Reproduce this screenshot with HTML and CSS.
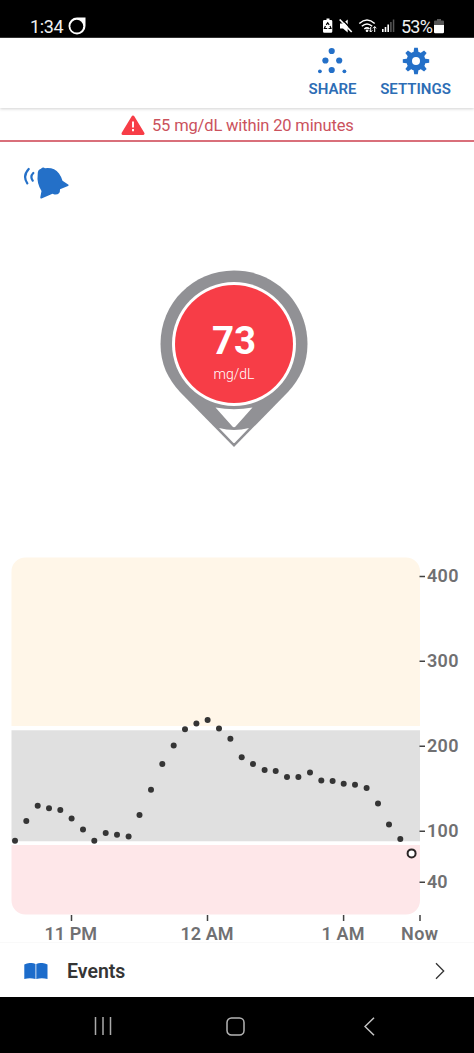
FILE: index.html
```html
<!DOCTYPE html>
<html lang="en">
<head>
  <meta charset="utf-8">
  <title>Glucose</title>
  <link rel="stylesheet" href="styles.css">
</head>
<body>
  <div class="status-bar">
    <span class="clock">1:34</span>
    <svg class="status-logo" width="18" height="18" viewBox="0 0 18 18">
      <path d="M9 .5H17.5V9A8.5 8.5 0 1 1 9 .5z" fill="#fff"/>
      <circle cx="8.8" cy="9.2" r="6.4" fill="#000"/>
    </svg>
    <svg class="status-icons" width="73" height="16" viewBox="0 0 73 16">
      <path d="M3 2h1.500V.5h3V2H9q1.300 0 1.300 1.300v10.200q0 1.300-1.300 1.300H2.300Q1 14.800 1 13.500V3.300Q1 2 2.300 2z" fill="#fff"/>
      <path d="M4.200 6.800l1.500-2 1.500 2M8 8l1 2.500H6.500M3.400 8l-1 2.500h2.800" fill="none" stroke="#000" stroke-width="1.200"/>
      <path d="M18 5.500h3l4.700-4v13l-4.700-4h-3z" fill="#fff"/>
      <path d="M19 .3l12 12.500" stroke="#000" stroke-width="1.500"/>
      <path d="M17.700 1.500l12 12.500" stroke="#fff" stroke-width="1.700"/>
      <g fill="none" stroke="#fff" stroke-width="1.500">
        <path d="M37.300 5.500q7.700-7 15.400 0M39.800 8.300q5.200-4.700 10.400 0M42.300 11q2.700-2.300 5.200 0"/>
        <path d="M48.700 9v5M47 12.300l1.700 1.700 1.700-1.700M52.700 14V8.700M51 10.300l1.700-1.700 1.700 1.700" stroke-width="1"/>
      </g>
      <circle cx="45" cy="12.700" r="1.300" fill="#fff"/>
      <path d="M60 11h1.600v3H60zM62.700 9h1.600v5h-1.600zM65.400 6.500H67V14h-1.600z" fill="#fff"/>
      <path d="M68.100 4h1.600v10h-1.600zM70.800 1.500h1.500V14h-1.500z" fill="#555"/>
    </svg>
    <span class="percent">53%</span>
    <svg class="battery" width="10" height="15" viewBox="0 0 10 15">
      <path d="M1 1.500h2V0h4v1.500h2q1 0 1 1V7H0V2.500q0-1 1-1z" fill="#555"/>
      <path d="M0 6h10v7q0 1.200-1.200 1.200H1.200Q0 14.200 0 13z" fill="#fff"/>
    </svg>
  </div>

  <div class="header">
    <div class="header-button share">
      <svg width="30" height="28" viewBox="1.300 0 30 28" fill="#2470c8">
        <circle cx="15" cy="4" r="3.100"/>
        <circle cx="8.700" cy="13.500" r="3.100"/>
        <circle cx="22.500" cy="13.500" r="3.100"/>
        <circle cx="15" cy="23" r="3.100"/>
        <circle cx="3.200" cy="24.300" r="1.900"/>
        <circle cx="27.700" cy="24.300" r="1.900"/>
      </svg>
      <span>SHARE</span>
    </div>
    <div class="header-button settings">
      <svg width="28" height="28" viewBox="-14 -14 28 28">
        <g fill="#2470c8">
          <circle r="9.600"/>
          <path id="teeth" d="M-2.600-8l.8-5.200h3.600l.8 5.200v16l-.8 5.200h-3.600L-2.600 8z"/>
          <use href="#teeth" transform="rotate(45)"/>
          <use href="#teeth" transform="rotate(90)"/>
          <use href="#teeth" transform="rotate(135)"/>
        </g>
        <circle r="4" fill="#fff"/>
      </svg>
      <span>SETTINGS</span>
    </div>
  </div>

  <div class="alert">
    <svg width="24" height="20" viewBox="0 0 24 20">
      <path d="M12 2L22 18.500H2z" fill="#f73d47" stroke="#f73d47" stroke-width="3" stroke-linejoin="round"/>
      <path d="M12 6.500v6M12 14v2.200" stroke="#fff" stroke-width="1.900"/>
    </svg>
    <span>55 mg/dL within 20 minutes</span>
  </div>

  <div class="reading">
    <svg class="bell" width="48" height="34" viewBox="0 0 48 34">
      <path d="M16.700 8.500Q16.500 3.500 20 2.700Q22 .7 24 2.200Q33 1 38 7.500Q40.500 11 41.500 14.700L47.500 18.800Q48 19.800 47 20L39 23.300Q39.300 29 33.500 28.500L31.500 27.800L20.500 32.500Q19 32.800 19.300 31.300L20.500 25Q15.500 17 16.700 8.500z" fill="#2470c8"/>
      <path d="M7.700 3Q1.300 10 6.300 17.300M12.300 7Q8.800 10.500 11.700 14.700" fill="none" stroke="#2470c8" stroke-width="2.200" stroke-linecap="round"/>
    </svg>
    <div class="gauge">
      <svg width="148" height="178" viewBox="0 0 148 178">
        <path d="M74 .5C33 .5 .5 33 .5 74C.5 94 8 109 20 122L74 177L128 122C140 109 147.500 94 147.500 74C147.500 33 115 .5 74 .5z" fill="#919195"/>
        <circle cx="74" cy="74" r="62" fill="#fff"/>
        <circle cx="74" cy="74" r="59" fill="#f73d47"/>
        <path d="M55.500 137.500Q74 141 92.500 137.500L76 156Q74 158.500 72 156z" fill="#fff"/>
        <path d="M59 158Q74 162 89 158L75 172.500Q74 173.500 73 172.500z" fill="#fff"/>
      </svg>
      <div class="gauge-text">
        <div class="value">73</div>
        <div class="unit">mg/dL</div>
      </div>
    </div>
  </div>

  <svg class="chart" width="474" height="397" viewBox="0 545 474 397">
    <path d="M11.500 726V571.500a14 14 0 0 1 14-14H406a14 14 0 0 1 14 14V726z" fill="#fff6e8"/>
    <path d="M11.500 730.300H420V841.300H11.500z" fill="#e0e0e0"/>
    <path d="M11.500 845H420V900.500a14 14 0 0 1-14 14H25.500a14 14 0 0 1-14-14z" fill="#fee7e9"/>
    <path d="M419.500 576.500h5.500M419.500 661.300h5.500M419.500 746.300h5.500M419.500 831.200h5.500M419.500 882.300h5.500M71.500 915v6M207.500 915v6M343.600 915v6M420 915v6" stroke="#424242" stroke-width="1.500"/>
    <g class="axis">
      <text x="427" y="581.500" textLength="31.500">400</text>
      <text x="427" y="666.500" textLength="31.500">300</text>
      <text x="427" y="751.500" textLength="31.500">200</text>
      <text x="427" y="836.500" textLength="31.500">100</text>
      <text x="427" y="887.500">40</text>
      <text x="44.500" y="939.500" textLength="52.500">11 PM</text>
      <text x="180.500" y="939.500" textLength="53">12 AM</text>
      <text x="321.500" y="939.500" textLength="43">1 AM</text>
      <text x="401" y="939.500" textLength="37">Now</text>
    </g>
    <g id="dots" fill="#353535"></g>
    <circle cx="411.600" cy="853.400" r="4" fill="#fff" stroke="#2c2626" stroke-width="2"/>
  </svg>

  <div class="events">
    <svg width="24" height="17" viewBox="0 0 24 17" fill="#1c6ccb">
      <path d="M.3 1.500Q6-1.300 11.500 1V16Q6 14.500.3 16z"/>
      <path d="M12.300 1Q18-1.300 23.500 1.500V16Q18 14.500 12.300 16z"/>
    </svg>
    <span>Events</span>
    <svg class="chevron" width="10" height="18" viewBox="0 0 10 18">
      <path d="M1 1.300L8.700 9L1 16.700" fill="none" stroke="#333" stroke-width="1.300"/>
    </svg>
  </div>

  <div class="nav-bar">
    <svg width="18" height="18" viewBox="0 0 18 18">
      <path d="M1.500 0v18M9 0v18M16.500 0v18" stroke="#aaa" stroke-width="1.500"/>
    </svg>
    <svg class="home" width="19" height="19" viewBox="0 0 19 19">
      <rect x="1" y="1" width="17" height="17" rx="4.500" fill="none" stroke="#b5b5b5" stroke-width="1.500"/>
    </svg>
    <svg width="11" height="19" viewBox="0 0 11 19">
      <path d="M10 .7L1 9.500L10 18.300" fill="none" stroke="#c4c4c4" stroke-width="1.500"/>
    </svg>
  </div>

  <script>
    // one reading every five minutes
    const readings = [
      [15, 840.7], [26.3, 821], [37.7, 805.7], [49, 808.3], [60.3, 810], [71.6, 818.4],
      [83, 829.6], [94.3, 840.7], [105.7, 833], [117, 834.7], [128.6, 836.4], [139.5, 815],
      [151, 789.7], [162.3, 764], [173.7, 745.4], [185, 729.3], [196.4, 723.4], [207.6, 720],
      [219, 728.4], [230.4, 738.7], [241.7, 757.3], [253, 764], [264.6, 770], [275.7, 771],
      [287, 777], [298.4, 777], [310, 772.6], [321.3, 780.4], [332.6, 781], [343.7, 783.7],
      [355, 784.7], [366.6, 788], [378, 803.4], [389, 824.4], [400.3, 839]
    ];
    document.getElementById('dots').innerHTML =
      readings.map(([x, y]) => `<circle cx="${x}" cy="${y}" r="3"/>`).join('');
  </script>
</body>
</html>
```
FILE: styles.css
```css
body {
  font-family: Roboto, "Liberation Sans", sans-serif;
  margin: 0;
  width: 474px;
  height: 1053px;
  overflow: hidden;
  background-color: #fff;
}

svg {
  display: block;
  flex-shrink: 0;
}

.status-bar {
  display: flex;
  align-items: center;
  box-sizing: border-box;
  height: 38px;
  padding: 15px 30px 0;
  background-color: #000;
  border-bottom: 1px solid #333;
  color: #f0f0f0;
  font-size: 18px;
}

.clock {
  width: 33px;
  letter-spacing: -0.4px;
}

.status-logo {
  margin-left: 5px;
}

.status-icons {
  margin-left: 236px;
}

.percent {
  width: 32px;
  margin-left: 6px;
  letter-spacing: -0.8px;
}

.battery {
  margin-left: 1px;
}

.header {
  display: flex;
  justify-content: flex-end;
  gap: 23px;
  box-sizing: border-box;
  height: 70px;
  padding: 9px 23px 0 0;
  box-shadow: 0 1px 3px rgba(0, 0, 0, 0.18);
}

.header-button {
  display: flex;
  flex-direction: column;
  align-items: center;
  color: #2d6db5;
  font-size: 15px;
  font-weight: 600;
  line-height: 18px;
}

.header-button span {
  margin-top: 5px;
}

.share {
  width: 49px;
}

.settings {
  width: 71px;
}

.alert {
  display: flex;
  align-items: center;
  box-sizing: border-box;
  height: 34px;
  padding: 2px 0 0 121px;
  border-bottom: 2px solid #d96f7a;
  color: #cb525d;
  font-size: 16.5px;
  letter-spacing: -0.15px;
}

.alert span {
  margin-left: 7px;
  white-space: nowrap;
}

.reading {
  box-sizing: border-box;
  height: 403px;
  padding-top: 24px;
}

.bell {
  margin-left: 21px;
}

.gauge {
  display: grid;
  width: 148px;
  margin: 70px 0 0 160px;
}

.gauge > * {
  grid-area: 1 / 1;
}

.gauge-text {
  padding-top: 48px;
  color: #fff;
  text-align: center;
}

.value {
  font-size: 38.5px;
  font-weight: bold;
  line-height: 46px;
}

.unit {
  font-size: 14px;
  font-weight: 300;
  line-height: 20px;
}

.axis {
  fill: #707072;
  font-size: 18px;
  font-weight: 600;
}

.events {
  display: flex;
  align-items: center;
  box-sizing: border-box;
  height: 55px;
  padding: 2px 29px 0 24px;
  border-top: 1px solid #f9f9f9;
  color: #353535;
  font-size: 19.5px;
  font-weight: 600;
}

.events span {
  margin-left: 19px;
}

.chevron {
  margin-left: auto;
}

.nav-bar {
  display: flex;
  align-items: center;
  gap: 125px;
  box-sizing: border-box;
  height: 56px;
  padding: 2px 0 0 94px;
  background-color: #000;
}

.home {
  margin: 0 -6px 0 -11px;
}
```
